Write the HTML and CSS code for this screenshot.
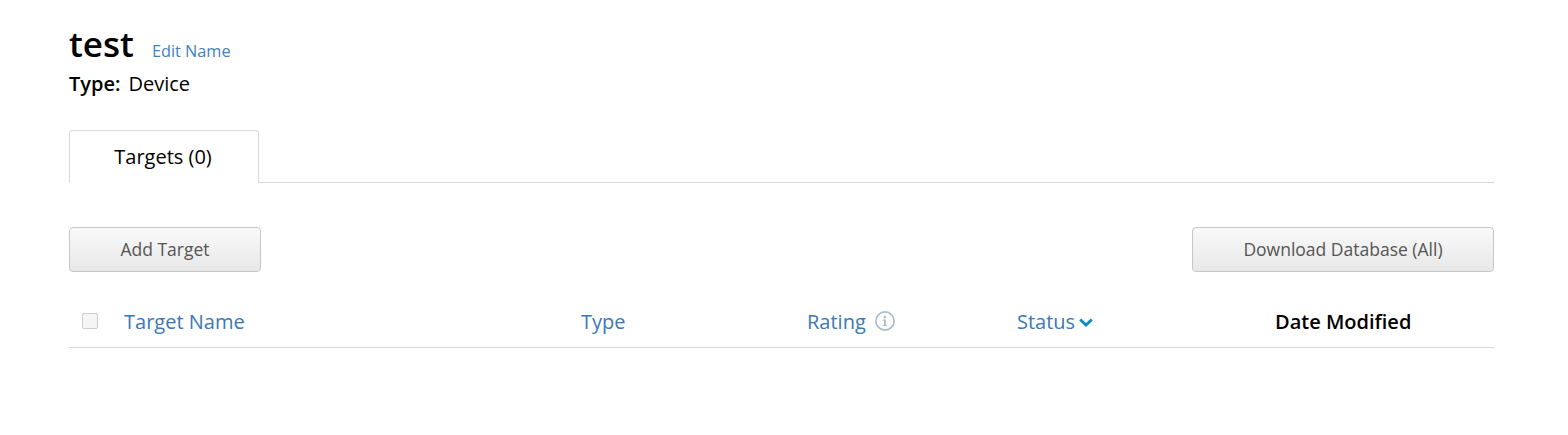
FILE: index.html
```html
<!DOCTYPE html>
<html lang="en">
<head>
<meta charset="utf-8">
<title>test</title>
<link rel="stylesheet" href="styles.css">
</head>
<body>
<main class="page">
  <header class="head">
    <div class="title-row">
      <h1 class="title">test</h1>
      <a class="edit-link" href="#">Edit Name</a>
    </div>
    <div class="type-row"><b class="type-label">Type:</b><span>Device</span></div>
  </header>
  <nav class="tabs"><a class="tab" href="#">Targets (0)</a></nav>
  <div class="actions">
    <button class="btn btn-add">Add Target</button>
    <button class="btn btn-download">Download Database (All)</button>
  </div>
  <div class="table-head">
    <div class="col col-check"><span class="checkbox"></span></div>
    <div class="col col-name"><a href="#">Target Name</a></div>
    <div class="col col-type"><a href="#">Type</a></div>
    <div class="col col-rating"><a href="#">Rating</a>
      <svg class="info" width="20" height="20" viewBox="0 0 20 20"><circle cx="10" cy="10" r="9.1" fill="none" stroke="#a9bcc9" stroke-width="1.6"/><path d="M7.8 8.4h3v5.5H12v1H7.8v-1H9V9.4H7.8zM9.8 4.8a1.3 1.3 0 1 1 0 2.6 1.3 1.3 0 0 1 0-2.6z" fill="#a9bcc9"/></svg>
    </div>
    <div class="col col-status"><a href="#">Status</a>
      <svg class="chev" width="14" height="9" viewBox="0 0 14 9"><path d="M1.2 1.4 7 7l5.8-5.6" fill="none" stroke="#0b8ac4" stroke-width="2.8"/></svg>
    </div>
    <div class="col col-date">Date Modified</div>
  </div>
</main>
</body>
</html>
```
FILE: styles.css
```css
* { box-sizing: border-box; }
html, body { margin: 0; padding: 0; background: #fff; }
body { font-family: "Open Sans", sans-serif; color: #000; overflow: hidden; height: 435px; }
a { text-decoration: none; color: #3a78b5; }
.page { width: 1425px; margin-left: 69px; padding-top: 22px; }
.title-row { display: flex; align-items: baseline; height: 44px; }
.title { margin: 0; font-size: 35px; line-height: 44px; font-weight: 600; }
.edit-link { margin-left: 18px; font-size: 16.3px; color: #3f82c0; }
.type-row { display: flex; gap: 8px; font-size: 20px; line-height: 24px; margin-top: 6px; }
.type-label { font-weight: 600; }
.tabs { margin-top: 34px; height: 53px; border-bottom: 1px solid #d9d9d9; display: flex; }
.tab { width: 190px; height: 53px; display: flex; align-items: center; justify-content: center; font-size: 20px; color: #000; background: #fff; border: 1px solid #d9d9d9; border-bottom: 0; border-radius: 3px 3px 0 0; padding: 0 2px 2px 0; }
.actions { display: flex; justify-content: space-between; margin-top: 44px; }
.btn { height: 45px; font: 17.5px "Open Sans", sans-serif; color: #555; background: linear-gradient(#f9f9f9, #e8e8e8); border: 1px solid #c6c6c6; border-radius: 4px; padding: 0 0 1px; }
.btn-add { width: 192px; }
.btn-download { width: 302px; }
.table-head { display: flex; align-items: center; height: 53px; margin-top: 23px; border-bottom: 1px solid #d9d9d9; font-size: 20px; }
.col { display: flex; align-items: center; }
.col-check { width: 55px; padding-left: 13px; }
.checkbox { width: 16px; height: 16px; margin-top: -1px; background: #f5f5f5; border: 1px solid #ccc; border-radius: 2px; }
.col-name { width: 457px; }
.col-type { width: 226px; }
.col-rating { width: 210px; gap: 9px; }
.info { margin-top: -1px; }
.col-status { width: 258px; gap: 5px; }
.col-date { font-weight: 600; }
.chev { margin-top: 2px; margin-left: -1px; }
```
